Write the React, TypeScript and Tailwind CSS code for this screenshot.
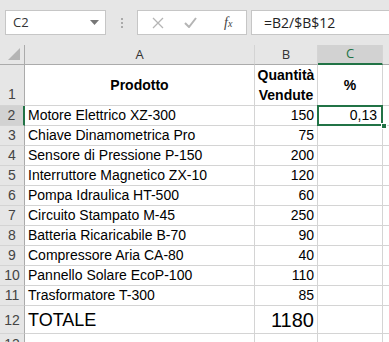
const rows: [string, number][] = [
  ["Motore Elettrico XZ-300", 150],
  ["Chiave Dinamometrica Pro", 75],
  ["Sensore di Pressione P-150", 200],
  ["Interruttore Magnetico ZX-10", 120],
  ["Pompa Idraulica HT-500", 60],
  ["Circuito Stampato M-45", 250],
  ["Batteria Ricaricabile B-70", 90],
  ["Compressore Aria CA-80", 40],
  ["Pannello Solare EcoP-100", 110],
  ["Trasformatore T-300", 85],
];

const cellFont = { fontFamily: '"Liberation Sans", Arial, sans-serif' };
const uiFont = { fontFamily: '"Open Sans", sans-serif' };

export default function App() {
  return (
    <div className="w-[389px] h-[342px] overflow-hidden bg-[#e6e6e6] text-black" style={cellFont}>
      {/* formula bar */}
      <div className="h-[45px] flex items-start pt-[10px] pl-[5px]">
        <div className="w-[101px] h-[25px] bg-white border border-[#c6c6c6] flex items-center justify-between pl-[7px] pr-[6px] text-[13px] text-[#333]" style={uiFont}>
          <span>C2</span>
          <svg width="9" height="5" viewBox="0 0 9 5"><path d="M0 0h9L4.5 5z" fill="#777" /></svg>
        </div>
        <div className="w-[31px] h-[25px] flex flex-col items-center justify-center gap-[2px]">
          <span className="w-[2px] h-[2px] bg-[#aaa]" />
          <span className="w-[2px] h-[2px] bg-[#aaa]" />
          <span className="w-[2px] h-[2px] bg-[#aaa]" />
        </div>
        <div className="w-[110px] h-[25px] bg-white border border-[#c6c6c6] flex items-center pl-[14px]">
          <svg width="12" height="12" viewBox="0 0 12 12"><path d="M1 1l10 10M11 1L1 11" stroke="#b5b5b5" strokeWidth="1.3" /></svg>
          <svg className="ml-[20px]" width="13" height="11" viewBox="0 0 13 11"><path d="M1 6l4 4 7-9" stroke="#b5b5b5" strokeWidth="2" fill="none" /></svg>
          <span className="ml-[27px] text-[14px] italic text-[#444]" style={{ fontFamily: '"Liberation Serif", serif' }}>f<span className="text-[10px]">x</span></span>
        </div>
        <div className="ml-[4px] flex-1 h-[25px] bg-white border border-[#c6c6c6] border-r-0 flex items-center pl-[12px] text-[14px] text-[#222]" style={uiFont}>
          =B2/$B$12
        </div>
      </div>

      {/* sheet */}
      <div className="grid grid-cols-[25px_230px_63px_65px_1fr] bg-white">
        {/* column headers */}
        <div className="h-[20px] bg-[#e6e6e6] border-r border-b border-[#ababab] relative">
          <svg className="absolute right-[4px] bottom-[4px]" width="12" height="12" viewBox="0 0 12 12"><path d="M12 0v12H0z" fill="#b4b4b4" /></svg>
        </div>
        <div className="h-[20px] bg-[#e6e6e6] border-r border-b border-[#ababab] border-r-[#d4d4d4] flex items-center justify-center text-[13px] text-[#333]" style={uiFont}>A</div>
        <div className="h-[20px] bg-[#e6e6e6] border-r border-b border-[#ababab] border-r-[#d4d4d4] flex items-center justify-center text-[13px] text-[#333]" style={uiFont}>B</div>
        <div className="h-[20px] bg-[#d2d2d2] border-r border-b-2 border-r-[#d4d4d4] border-b-[#217346] flex items-center justify-center text-[13px] text-[#217346]" style={uiFont}>C</div>
        <div className="h-[20px] bg-[#e6e6e6] border-b border-[#ababab]" />

        {/* row 1 */}
        <div className="h-[41px] bg-[#e6e6e6] border-r border-b border-[#ababab] border-b-[#d4d4d4] flex items-end justify-center text-[14px] text-[#444]">1</div>
        <div className="h-[41px] border-r border-b border-[#d4d4d4] flex items-center justify-center font-bold text-[14px]">Prodotto</div>
        <div className="h-[41px] border-r border-b border-[#d4d4d4] flex items-center justify-center text-center font-bold text-[14px] leading-[20px]">Quantità<br />Vendute</div>
        <div className="h-[41px] border-r border-b border-[#d4d4d4] flex items-center justify-center font-bold text-[14px]">%</div>
        <div className="h-[41px] border-b border-[#d4d4d4]" />

        {rows.map(([name, qty], i) => {
          const n = i + 2;
          const sel = n === 2;
          return (
            <div key={n} className="contents">
              <div className={`h-[20px] border-r border-b border-b-[#d4d4d4] flex items-center justify-center text-[14px] text-[#444] ${sel ? "bg-[#d2d2d2] border-r-2 border-r-[#217346]" : "bg-[#e6e6e6] border-r-[#ababab]"}`}>{n}</div>
              <div className="h-[20px] border-r border-b border-[#d4d4d4] flex items-center pl-[3px] text-[14px] whitespace-nowrap">{name}</div>
              <div className="h-[20px] border-r border-b border-[#d4d4d4] flex items-center justify-end pr-[3px] text-[14px]">{qty}</div>
              {sel ? (
                <div className="h-[20px] border-b border-[#d4d4d4] relative">
                  <div className="absolute -left-[1px] -top-[1px] w-[66px] h-[21px] border-2 border-[#217346] flex items-center justify-end pr-[4px] text-[14px]">0,13</div>
                  <div className="absolute -right-[4px] bottom-[-4px] w-[6px] h-[6px] bg-[#217346] border border-white" />
                </div>
              ) : (
                <div className="h-[20px] border-r border-b border-[#d4d4d4]" />
              )}
              <div className="h-[20px] border-b border-[#d4d4d4]" />
            </div>
          );
        })}

        {/* row 12 */}
        <div className="h-[28px] bg-[#e6e6e6] border-r border-b border-[#ababab] border-b-[#d4d4d4] flex items-end justify-center pb-[2px] text-[14px] text-[#444]">12</div>
        <div className="h-[28px] border-r border-b border-[#d4d4d4] flex items-end pl-[3px] text-[18px] leading-[26px]">TOTALE</div>
        <div className="h-[28px] border-r border-b border-[#d4d4d4] flex items-end justify-end pr-[3px] text-[20px] leading-[26px]">1180</div>
        <div className="h-[28px] border-r border-b border-[#d4d4d4]" />
        <div className="h-[28px] border-b border-[#d4d4d4]" />

        {/* row 13 */}
        <div className="h-[20px] bg-[#e6e6e6] border-r border-[#ababab] flex items-center justify-center text-[14px] text-[#444]">13</div>
        <div className="h-[20px] border-r border-[#d4d4d4]" />
        <div className="h-[20px] border-r border-[#d4d4d4]" />
        <div className="h-[20px] border-r border-[#d4d4d4]" />
        <div className="h-[20px]" />
      </div>
    </div>
  );
}
